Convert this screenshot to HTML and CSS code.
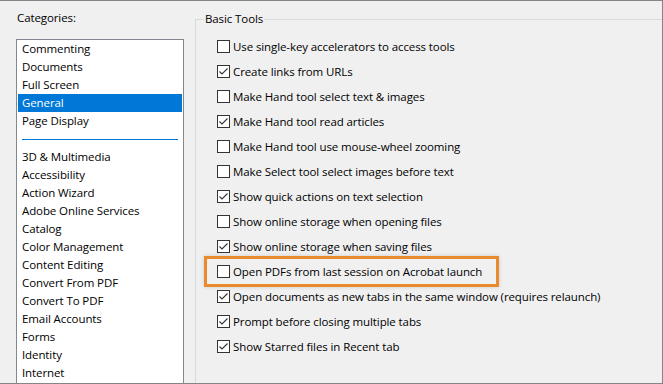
FILE: index.html
```html
<!DOCTYPE html>
<html lang="en">
<head>
    <meta charset="UTF-8">
    <title>Preferences - General</title>
    <link rel="stylesheet" href="styles.css">
</head>
<body>
    <div class="frame">
        <div class="sidebar">
            <div class="label">Categories:</div>
            <div class="list">
                <div class="item">Commenting</div>
                <div class="item">Documents</div>
                <div class="item">Full Screen</div>
                <div class="item selected">General</div>
                <div class="item">Page Display</div>
                <div class="separator"></div>
                <div class="item">3D &amp; Multimedia</div>
                <div class="item">Accessibility</div>
                <div class="item">Action Wizard</div>
                <div class="item">Adobe Online Services</div>
                <div class="item">Catalog</div>
                <div class="item">Color Management</div>
                <div class="item">Content Editing</div>
                <div class="item">Convert From PDF</div>
                <div class="item">Convert To PDF</div>
                <div class="item">Email Accounts</div>
                <div class="item">Forms</div>
                <div class="item">Identity</div>
                <div class="item">Internet</div>
            </div>
        </div>

        <div class="pane">
            <div class="group-title">Basic Tools</div>
            <div class="options">
                <div class="option"><span class="box"></span>Use single-key accelerators to access tools</div>
                <div class="option"><span class="box checked"><svg viewBox="0 0 13 13"><polyline points="2.5,6.5 5,9 10.5,3.5"/></svg></span>Create links from URLs</div>
                <div class="option"><span class="box"></span>Make Hand tool select text &amp; images</div>
                <div class="option"><span class="box checked"><svg viewBox="0 0 13 13"><polyline points="2.5,6.5 5,9 10.5,3.5"/></svg></span>Make Hand tool read articles</div>
                <div class="option"><span class="box"></span>Make Hand tool use mouse-wheel zooming</div>
                <div class="option"><span class="box"></span>Make Select tool select images before text</div>
                <div class="option"><span class="box checked"><svg viewBox="0 0 13 13"><polyline points="2.5,6.5 5,9 10.5,3.5"/></svg></span>Show quick actions on text selection</div>
                <div class="option"><span class="box"></span>Show online storage when opening files</div>
                <div class="option"><span class="box checked"><svg viewBox="0 0 13 13"><polyline points="2.5,6.5 5,9 10.5,3.5"/></svg></span>Show online storage when saving files</div>
                <div class="option highlight"><span class="box"></span>Open PDFs from last session on Acrobat launch</div>
                <div class="option"><span class="box checked"><svg viewBox="0 0 13 13"><polyline points="2.5,6.5 5,9 10.5,3.5"/></svg></span>Open documents as new tabs in the same window (requires relaunch)</div>
                <div class="option"><span class="box checked"><svg viewBox="0 0 13 13"><polyline points="2.5,6.5 5,9 10.5,3.5"/></svg></span>Prompt before closing multiple tabs</div>
                <div class="option"><span class="box checked"><svg viewBox="0 0 13 13"><polyline points="2.5,6.5 5,9 10.5,3.5"/></svg></span>Show Starred files in Recent tab</div>
            </div>
        </div>
    </div>
</body>
</html>
```

FILE: styles.css
```css
body {
    margin: 0;
    padding: 0;
    font-family: "Open Sans", "Noto Sans", Arial, sans-serif;
    font-size: 11.5px;
    letter-spacing: -0.1px;
    color: #000;
    background-color: #f0f0f0;
}
.frame {
    box-sizing: border-box;
    width: 663px;
    height: 384px;
    display: flex;
    border-top: 1px solid #858585;
    border-right: 1px solid #858585;
    border-bottom: 1px solid #858585;
    background-color: #f0f0f0;
    overflow: hidden;
}
.sidebar {
    width: 195px;
    flex-shrink: 0;
    display: flex;
    flex-direction: column;
}
.label {
    margin: 9px 0 0 17px;
    line-height: 16px;
}
.list {
    flex: 1;
    margin: 13px 0 0 16px;
    width: 166px;
    background-color: #fff;
    border: 1px solid #828790;
    border-bottom: none;
}
.item {
    height: 18px;
    line-height: 18px;
    margin: 0 1px;
    padding-left: 4px;
    white-space: nowrap;
}
.item.selected {
    background-color: #0078d7;
    color: #fff;
}
.separator {
    height: 9px;
    margin: 0 5px 8px 5px;
    border-bottom: 1px solid #0078d7;
}
.pane {
    flex: 1;
    margin-top: 18px;
    border-top: 1px solid #dadada;
    border-left: 1px solid #dadada;
    padding-left: 8px;
}
.group-title {
    width: fit-content;
    margin-top: -9px;
    padding: 0 1px;
    line-height: 16px;
    background-color: #f0f0f0;
}
.options {
    margin-top: 7px;
    padding-left: 13px;
}
.option {
    display: flex;
    align-items: center;
    width: fit-content;
    height: 25px;
    white-space: nowrap;
}
.box {
    box-sizing: border-box;
    width: 13px;
    height: 13px;
    margin-right: 3px;
    border: 1px solid #333;
    background-color: #fff;
    flex-shrink: 0;
}
.box svg {
    display: block;
    width: 13px;
    height: 13px;
    margin: -1px 0 0 -1px;
}
.box polyline {
    fill: none;
    stroke: #333;
    stroke-width: 1.1;
}
.option.highlight {
    margin-left: -10px;
    padding: 0 14px 0 10px;
    outline: 3px solid #e98a2c;
    box-shadow: 0 0 4px 3px rgba(0, 0, 0, 0.15);
}
```
